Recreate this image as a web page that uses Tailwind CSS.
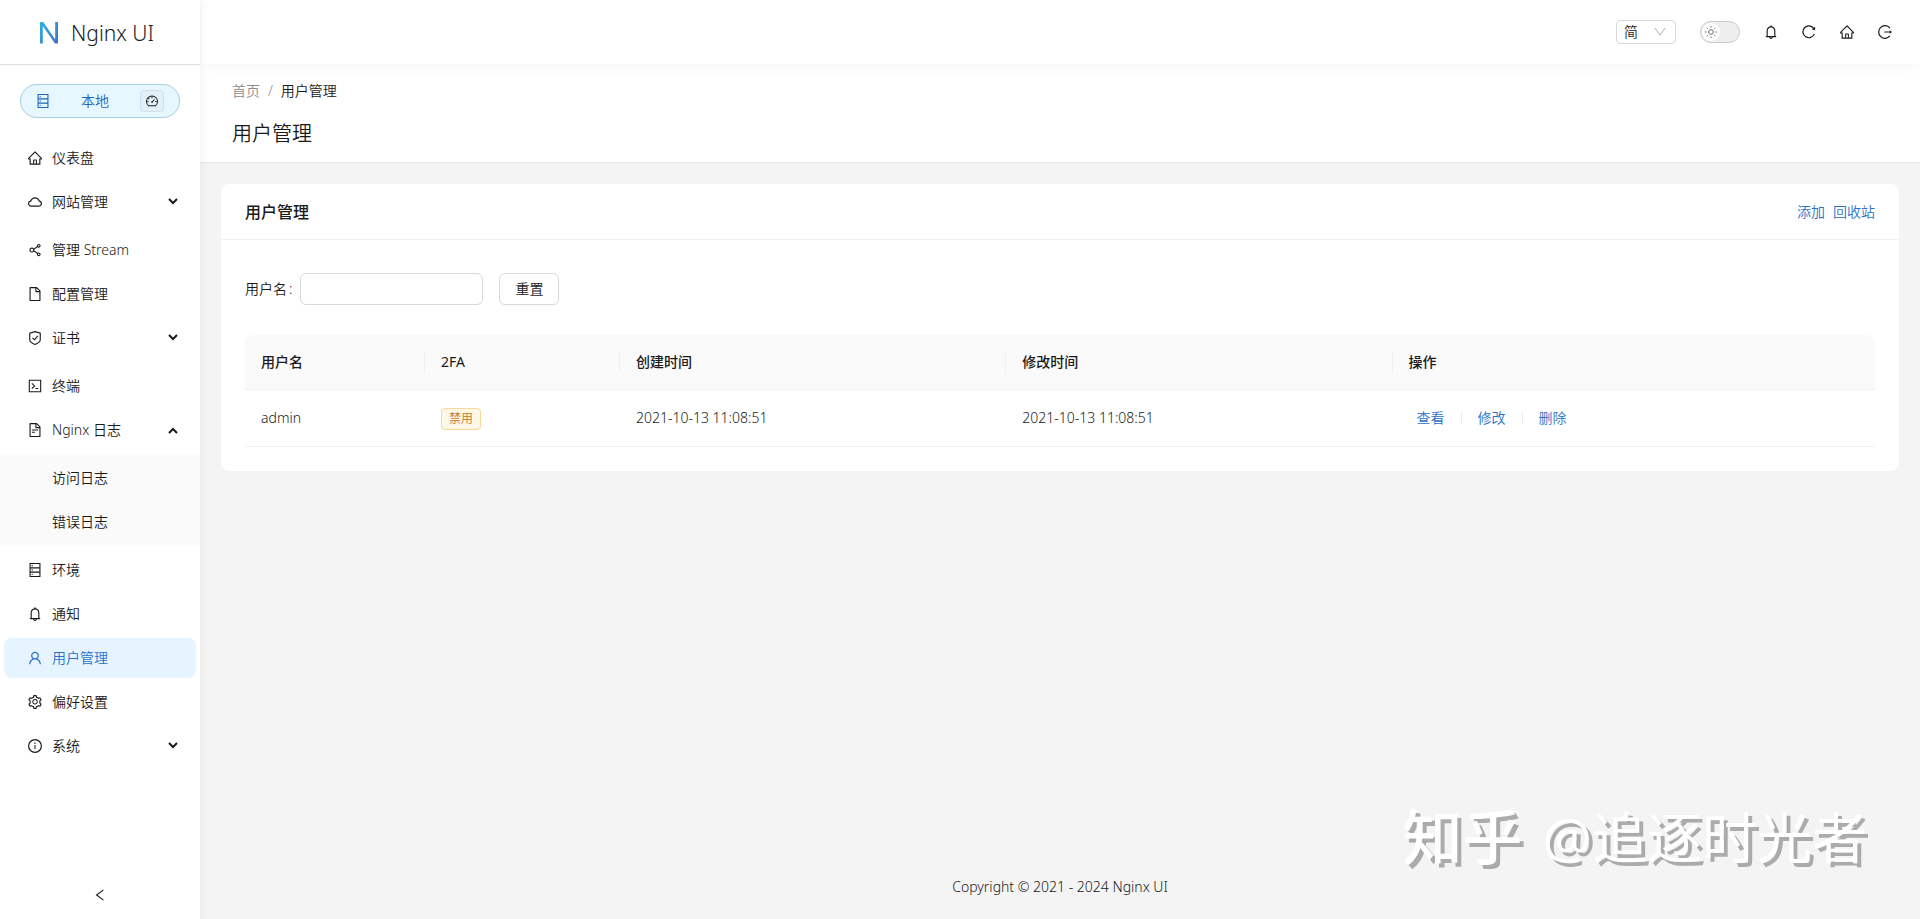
<!DOCTYPE html>
<html lang="zh-CN">
<head>
<meta charset="utf-8">
<title>Nginx UI</title>
<script src="https://cdn.jsdelivr.net/npm/@tailwindcss/browser@4"></script>
</head>
<body class="min-h-screen flex bg-[#f4f4f4] text-sm leading-[22px] font-[350] text-[#1a1a1a] font-['Noto_Sans','Noto_Sans_CJK_SC',sans-serif]">

<svg class="hidden" aria-hidden="true">
  <symbol id="home" viewBox="64 64 896 896"><path d="M946.5 505L560.1 118.8l-25.9-25.9a31.5 31.5 0 00-44.4 0L77.5 505a63.9 63.9 0 00-18.8 46c.4 35.2 29.7 63.3 64.9 63.3h42.5V940h691.8V614.3h43.4c17.1 0 33.2-6.7 45.3-18.8a63.6 63.6 0 0018.7-45.3c0-17-6.7-33.1-18.8-45.2zM568 868H456V664h112v204zm217.9-325.7V868H632V640c0-22.1-17.9-40-40-40H432c-22.1 0-40 17.9-40 40v228H238.1V542.3h-96l370-369.7 23.1 23.1L882 542.3h-96.1z"/></symbol>
  <symbol id="cloud" viewBox="64 64 896 896"><path d="M811.4 418.7C765.6 297.9 648.9 212 512.2 212S258.8 297.8 213 418.6C127.3 441.1 64 519.1 64 612c0 110.5 89.5 200 199.9 200h496.2C870.5 812 960 722.5 960 612c0-92.7-63.1-170.7-148.6-193.3zm36.3 281a123.07 123.07 0 01-87.6 36.3H263.9c-33.1 0-64.2-12.9-87.6-36.3A123.3 123.3 0 01140 612c0-28 9.1-54.3 26.2-76.3a125.7 125.7 0 0166.1-43.7l37.9-9.9 13.9-36.6c8.6-22.8 20.6-44.1 35.7-63.4a245.6 245.6 0 0152.4-49.9c41.1-28.9 89.5-44.2 140-44.2s98.9 15.3 140 44.2c19.9 14 37.5 30.8 52.4 49.9 15.1 19.3 27.1 40.7 35.7 63.4l13.8 36.5 37.8 10c54.3 14.5 92.1 63.8 92.1 120 0 33.1-12.9 64.3-36.3 87.7z"/></symbol>
  <symbol id="share" viewBox="64 64 896 896"><path d="M752 664c-28.5 0-54.8 10-75.4 26.7L469.4 540.8a160.68 160.68 0 000-57.6l207.2-149.9C697.2 350 723.5 360 752 360c66.2 0 120-53.8 120-120s-53.8-120-120-120-120 53.8-120 120c0 11.6 1.6 22.7 4.7 33.3L439.9 415.8C410.7 377.1 364.3 352 312 352c-88.4 0-160 71.6-160 160s71.6 160 160 160c52.3 0 98.7-25.1 127.9-63.8l196.8 142.5c-3.1 10.6-4.7 21.8-4.7 33.3 0 66.2 53.8 120 120 120s120-53.8 120-120-53.8-120-120-120zm0-476c28.7 0 52 23.3 52 52s-23.3 52-52 52-52-23.3-52-52 23.3-52 52-52zM312 600c-48.5 0-88-39.5-88-88s39.5-88 88-88 88 39.5 88 88-39.5 88-88 88zm440 236c-28.7 0-52-23.3-52-52s23.3-52 52-52 52 23.3 52 52-23.3 52-52 52z"/></symbol>
  <symbol id="file" viewBox="64 64 896 896"><path d="M854.6 288.6L639.4 73.4c-6-6-14.1-9.4-22.6-9.4H192c-17.7 0-32 14.3-32 32v832c0 17.7 14.3 32 32 32h640c17.7 0 32-14.3 32-32V311.3c0-8.5-3.4-16.7-9.4-22.7zM790.2 326H602V137.8L790.2 326zm1.8 562H232V136h302v216a42 42 0 0042 42h216v494z"/></symbol>
  <symbol id="filetext" viewBox="64 64 896 896"><path d="M854.6 288.6L639.4 73.4c-6-6-14.1-9.4-22.6-9.4H192c-17.7 0-32 14.3-32 32v832c0 17.7 14.3 32 32 32h640c17.7 0 32-14.3 32-32V311.3c0-8.5-3.4-16.7-9.4-22.7zM790.2 326H602V137.8L790.2 326zm1.8 562H232V136h302v216a42 42 0 0042 42h216v494zM504 618H320c-4.4 0-8 3.6-8 8v48c0 4.4 3.6 8 8 8h184c4.4 0 8-3.6 8-8v-48c0-4.4-3.6-8-8-8zM312 490v48c0 4.4 3.6 8 8 8h384c4.4 0 8-3.6 8-8v-48c0-4.4-3.6-8-8-8H320c-4.4 0-8 3.6-8 8z"/></symbol>
  <symbol id="safety" viewBox="64 64 896 896"><path d="M512 102L848 210V640C848 760 640 870 512 922C384 870 176 760 176 640V210ZM352 500L484 626L692 372" fill="none" stroke="currentColor" stroke-width="72"/></symbol>
  <symbol id="code" viewBox="64 64 896 896"><path d="M148 148H876V876H148ZM310 340L486 510L310 680M540 670H714" fill="none" stroke="currentColor" stroke-width="70"/></symbol>
  <symbol id="database" viewBox="64 64 896 896"><path d="M196 100H828V924H196ZM196 374H828M196 650H828" fill="none" stroke="currentColor" stroke-width="70"/><circle cx="330" cy="238" r="42"/><circle cx="330" cy="512" r="42"/><circle cx="330" cy="788" r="42"/></symbol>
  <symbol id="bell" viewBox="64 64 896 896"><path d="M816 768h-24V428c0-141.1-104.3-257.7-240-277.1V112c0-22.1-17.9-40-40-40s-40 17.9-40 40v38.9c-135.7 19.4-240 136-240 277.1v340h-24c-17.7 0-32 14.3-32 32v32c0 4.4 3.6 8 8 8h216c0 61.8 50.2 112 112 112s112-50.2 112-112h216c4.4 0 8-3.6 8-8v-32c0-17.7-14.3-32-32-32zM512 888c-26.5 0-48-21.5-48-48h96c0 26.5-21.5 48-48 48zM304 768V428c0-55.6 21.6-107.8 60.9-147.1S456.4 220 512 220c55.6 0 107.8 21.6 147.1 60.9S720 372.4 720 428v340H304z"/></symbol>
  <symbol id="user" viewBox="64 64 896 896"><path d="M858.5 763.6a374 374 0 00-80.6-119.5 375.63 375.63 0 00-119.5-80.6c-.4-.2-.8-.3-1.2-.5C719.5 518 760 444.7 760 362c0-137-111-248-248-248S264 225 264 362c0 82.7 40.5 156 102.8 201.1-.4.2-.8.3-1.2.5-44.8 18.9-85 46-119.5 80.6a375.63 375.63 0 00-80.6 119.5A371.7 371.7 0 00136 901.8a8 8 0 008 8.2h60c4.4 0 7.9-3.5 8-7.8 2-77.2 33-149.5 87.8-204.3 56.7-56.7 132-87.9 212.2-87.9s155.5 31.2 212.2 87.9C779 752.7 810 825 812 902.2c.1 4.4 3.6 7.8 8 7.8h60a8 8 0 008-8.2c-1-47.8-10.9-94.3-29.5-138.2zM512 534c-45.9 0-89.1-17.9-121.6-50.4S340 407.9 340 362c0-45.9 17.9-89.1 50.4-121.6S466.1 190 512 190s89.1 17.9 121.6 50.4S684 316.1 684 362c0 45.9-17.9 89.1-50.4 121.6S557.9 534 512 534z"/></symbol>
  <symbol id="setting" viewBox="64 64 896 896"><path d="M924.8 625.7l-65.5-56c3.1-19 4.7-38.4 4.7-57.8s-1.6-38.8-4.7-57.8l65.5-56a32.03 32.03 0 009.3-35.2l-.9-2.6a443.74 443.74 0 00-79.7-137.9l-1.8-2.1a32.12 32.12 0 00-35.1-9.5l-81.3 28.9c-30-24.6-63.5-44-99.7-57.6l-15.7-85a32.05 32.05 0 00-25.8-25.7l-2.7-.5c-52.1-9.4-106.9-9.4-159 0l-2.7.5a32.05 32.05 0 00-25.8 25.7l-15.8 85.4a351.86 351.86 0 00-99 57.4l-81.9-29.1a32 32 0 00-35.1 9.5l-1.8 2.1a446.02 446.02 0 00-79.7 137.9l-.9 2.6c-4.5 12.5-.8 26.5 9.3 35.2l66.3 56.6c-3.1 18.8-4.6 38-4.6 57.1 0 19.2 1.5 38.4 4.6 57.1L99 625.5a32.03 32.03 0 00-9.3 35.2l.9 2.6c18.1 50.4 44.9 96.9 79.7 137.9l1.8 2.1a32.12 32.12 0 0035.1 9.5l81.9-29.1c29.8 24.5 63.1 43.9 99 57.4l15.8 85.4a32.05 32.05 0 0025.8 25.7l2.7.5a449.4 449.4 0 00159 0l2.7-.5a32.05 32.05 0 0025.8-25.7l15.7-85a350 350 0 0099.7-57.6l81.3 28.9a32 32 0 0035.1-9.5l1.8-2.1c34.8-41.1 61.6-87.5 79.7-137.9l.9-2.6c4.5-12.3.8-26.3-9.3-35zM788.3 465.9c2.5 15.1 3.8 30.6 3.8 46.1s-1.3 31-3.8 46.1l-6.6 40.1 74.7 63.9a370.03 370.03 0 01-42.6 73.6L721 702.8l-31.4 25.8c-23.9 19.6-50.5 35-79.3 45.8l-38.1 14.3-17.9 97a377.5 377.5 0 01-85 0l-17.9-97.2-37.8-14.5c-28.5-10.8-55-26.2-78.7-45.7l-31.4-25.9-93.4 33.2c-17-22.9-31.2-47.6-42.6-73.6l75.5-64.5-6.5-40c-2.4-14.9-3.7-30.3-3.7-45.5 0-15.3 1.2-30.6 3.7-45.5l6.5-40-75.5-64.5c11.3-26.1 25.6-50.7 42.6-73.6l93.4 33.2 31.4-25.9c23.7-19.5 50.2-34.9 78.7-45.7l37.9-14.3 17.9-97.2c28.1-3.2 56.8-3.2 85 0l17.9 97 38.1 14.3c28.7 10.8 55.4 26.2 79.3 45.8l31.4 25.8 92.8-32.9c17 22.9 31.2 47.6 42.6 73.6L781.8 426l6.5 39.9zM512 326c-97.2 0-176 78.8-176 176s78.8 176 176 176 176-78.8 176-176-78.8-176-176-176zm79.2 255.2A111.6 111.6 0 01512 614c-29.9 0-58-11.7-79.2-32.8A111.6 111.6 0 01400 502c0-29.9 11.7-58 32.8-79.2C454 401.6 482.1 390 512 390c29.9 0 58 11.6 79.2 32.8A111.6 111.6 0 01624 502c0 29.9-11.7 58-32.8 79.2z"/></symbol>
  <symbol id="info" viewBox="64 64 896 896"><circle cx="512" cy="512" r="410" fill="none" stroke="currentColor" stroke-width="76"/><circle cx="512" cy="336" r="48"/><path d="M480 448h64v272h-64z"/></symbol>
  <symbol id="dashboard" viewBox="64 64 896 896"><path d="M264 872A410 410 0 1 1 760 872ZM512 200V300M240 300L310 370M170 550H270M754 550H854" fill="none" stroke="currentColor" stroke-width="76"/><path d="M512 590L700 400" stroke="currentColor" stroke-width="76"/><circle cx="512" cy="590" r="62"/></symbol>
  <symbol id="reload" viewBox="64 64 896 896"><path d="M856 634A378 378 0 1 1 810 280" fill="none" stroke="currentColor" stroke-width="78"/><path d="M905 180V400L690 348Z"/></symbol>
  <symbol id="logout" viewBox="64 64 896 896"><path d="M826 258A405 405 0 1 0 826 766M470 512H860" fill="none" stroke="currentColor" stroke-width="78"/><path d="M815 400L960 512L815 624Z"/></symbol>
  <symbol id="arrow" viewBox="0 0 10 10"><path d="M1 2L5 6L9 2" fill="none" stroke="currentColor" stroke-width="2"/></symbol>
  <symbol id="chevron" viewBox="0 0 12 12"><path d="M1 2L6 9L11 2" fill="none" stroke="currentColor" stroke-width="1.2"/></symbol>
  <symbol id="left" viewBox="0 0 14 14"><path d="M11 1L3 7L11 13" fill="none" stroke="currentColor" stroke-width="1.3"/></symbol>
</svg>

<aside class="relative z-10 w-[200px] shrink-0 min-h-screen bg-white flex flex-col shadow-[2px_0_8px_rgba(29,35,41,0.05)]">
  <a href="#" class="h-16 shrink-0 flex items-center gap-3 pl-[39px] pt-[2px] shadow-[0_1px_1px_rgba(0,0,0,0.12)]">
    <svg class="w-5 h-[22px]" viewBox="0 0 20 22" role="img" aria-label="N">
      <defs><linearGradient id="g" x1="0" y1="0" x2="1" y2="1"><stop offset="0" stop-color="#2cb4e0"/><stop offset="1" stop-color="#4270c8"/></linearGradient></defs>
      <path d="M1 21.500V0H4.200L16.200 17.500V0H19V21.500H16L3.800 4V21.500Z" fill="url(#g)"/>
    </svg>
    <span class="text-[21px]">Nginx UI</span>
  </a>
  <div class="px-5 pt-5 pb-4">
    <div class="h-[34px] rounded-full border border-[#a6cfe0] bg-[#e6f7ff] flex items-center pl-[15px] pr-[15px] text-[#1f66b8]">
      <svg class="size-[14px]" fill="currentColor"><use href="#database"/></svg>
      <span class="flex-1 text-center">本地</span>
      <button type="button" aria-label="dashboard" class="w-6 h-[22px] rounded border border-[#d2dfe6] bg-[#e2f1f8] text-[#1f1f1f] flex items-center justify-center"><svg class="size-3" fill="currentColor"><use href="#dashboard"/></svg></button>
    </div>
  </div>
  <nav class="py-1">
    <ul>
      <li class="mx-1 mb-1"><a href="#" class="h-10 rounded-lg flex items-center gap-[10px] pl-6"><svg class="size-[14px]" fill="currentColor"><use href="#home"/></svg>仪表盘</a></li>
      <li class="mx-1 mb-2"><button type="button" class="w-full h-10 rounded-lg flex items-center gap-[10px] pl-6 pr-[18px]"><svg class="size-[14px]" fill="currentColor"><use href="#cloud"/></svg><span class="flex-1 text-left">网站管理</span><svg class="size-[10px]"><use href="#arrow"/></svg></button></li>
      <li class="mx-1 mb-1"><a href="#" class="h-10 rounded-lg flex items-center gap-[10px] pl-6"><svg class="size-[14px]" fill="currentColor"><use href="#share"/></svg>管理 Stream</a></li>
      <li class="mx-1 mb-1"><a href="#" class="h-10 rounded-lg flex items-center gap-[10px] pl-6"><svg class="size-[14px]" fill="currentColor"><use href="#file"/></svg>配置管理</a></li>
      <li class="mx-1 mb-2"><button type="button" class="w-full h-10 rounded-lg flex items-center gap-[10px] pl-6 pr-[18px]"><svg class="size-[14px]" fill="currentColor"><use href="#safety"/></svg><span class="flex-1 text-left">证书</span><svg class="size-[10px]"><use href="#arrow"/></svg></button></li>
      <li class="mx-1 mb-1"><a href="#" class="h-10 rounded-lg flex items-center gap-[10px] pl-6"><svg class="size-[14px]" fill="currentColor"><use href="#code"/></svg>终端</a></li>
      <li class="mb-1">
        <button type="button" class="w-full h-10 flex items-center gap-[10px] pl-7 pr-[22px] mb-1"><svg class="size-[14px]" fill="currentColor"><use href="#filetext"/></svg><span class="flex-1 text-left">Nginx 日志</span><svg class="size-[10px] rotate-180"><use href="#arrow"/></svg></button>
        <ul class="bg-[#fafafa] py-1 flex flex-col gap-1">
          <li><a href="#" class="h-10 flex items-center pl-[52px]">访问日志</a></li>
          <li><a href="#" class="h-10 flex items-center pl-[52px]">错误日志</a></li>
        </ul>
      </li>
      <li class="mx-1 mb-1"><a href="#" class="h-10 rounded-lg flex items-center gap-[10px] pl-6"><svg class="size-[14px]" fill="currentColor"><use href="#database"/></svg>环境</a></li>
      <li class="mx-1 mb-1"><a href="#" class="h-10 rounded-lg flex items-center gap-[10px] pl-6"><svg class="size-[14px]" fill="currentColor"><use href="#bell"/></svg>通知</a></li>
      <li class="mx-1 mb-1"><a href="#" aria-current="page" class="h-10 rounded-lg flex items-center gap-[10px] pl-6 bg-[#e6f4ff] text-[#2a71c5]"><svg class="size-[14px]" fill="currentColor"><use href="#user"/></svg>用户管理</a></li>
      <li class="mx-1 mb-1"><a href="#" class="h-10 rounded-lg flex items-center gap-[10px] pl-6"><svg class="size-[14px]" fill="currentColor"><use href="#setting"/></svg>偏好设置</a></li>
      <li class="mx-1"><button type="button" class="w-full h-10 rounded-lg flex items-center gap-[10px] pl-6 pr-[18px]"><svg class="size-[14px]" fill="currentColor"><use href="#info"/></svg><span class="flex-1 text-left">系统</span><svg class="size-[10px]"><use href="#arrow"/></svg></button></li>
    </ul>
  </nav>
  <button type="button" aria-label="collapse" class="mt-auto h-12 flex items-center justify-center"><svg class="size-3"><use href="#left"/></svg></button>
</aside>

<div class="flex-1 min-w-0 flex flex-col">
  <header class="relative h-16 shrink-0 bg-white flex items-center justify-end gap-6 pr-7 shadow-[0_0_16px_rgba(0,0,0,0.05)]">
    <div class="relative">
      <select aria-label="language" class="block w-[60px] h-6 rounded border border-[#d9d9d9] bg-white pl-[7px] appearance-none"><option>简</option></select>
      <svg class="absolute right-[10px] top-[6px] size-3 text-[#bfbfbf] pointer-events-none"><use href="#chevron"/></svg>
    </div>
    <button type="button" role="switch" aria-checked="false" aria-label="theme" class="w-10 h-[22px] rounded-full border border-[#c9cacc] bg-[#eeeef0] flex items-center px-px">
      <span class="size-[18px] rounded-full bg-white flex items-center justify-center text-[#6b6b6b]"><svg class="size-3" viewBox="0 0 12 12" fill="none" stroke="currentColor"><circle cx="6" cy="6" r="2.300"/><path d="M6 0V1.500M6 10.500V12M0 6H1.500M10.500 6H12M1.800 1.800L2.800 2.800M9.200 9.200L10.200 10.200M1.800 10.200L2.800 9.200M9.200 2.800L10.200 1.800"/></svg></span>
    </button>
    <button type="button" aria-label="notifications"><svg class="size-[14px]" fill="currentColor"><use href="#bell"/></svg></button>
    <button type="button" aria-label="reload"><svg class="size-[14px]" fill="currentColor"><use href="#reload"/></svg></button>
    <a href="#" aria-label="home"><svg class="size-[14px]" fill="currentColor"><use href="#home"/></svg></a>
    <button type="button" aria-label="logout"><svg class="size-[14px]" fill="currentColor"><use href="#logout"/></svg></button>
  </header>

  <div class="bg-white border-b border-[#e3e3e3] px-8 pt-4 pb-3">
    <nav aria-label="breadcrumb" class="flex gap-2"><a href="#" class="text-[#8c8c8c]">首页</a><span class="text-[#8c8c8c]">/</span><span>用户管理</span></nav>
    <h1 class="mt-4 text-xl leading-8">用户管理</h1>
  </div>

  <main class="px-[21px] pt-[21px]">
    <section class="bg-white rounded-lg">
      <div class="h-14 px-6 border-b border-[#f0f0f0] flex items-center justify-between">
        <h2 class="text-base font-medium">用户管理</h2>
        <div class="flex gap-2 text-[#2a71c5]"><a href="#">添加</a><a href="#">回收站</a></div>
      </div>
      <div class="px-6 pt-[33px] pb-6">
        <form class="flex items-center mb-[30px]">
          <label for="name" class="mr-2">用户名<span class="ml-[2px]">:</span></label>
          <input id="name" type="text" class="w-[183px] h-8 rounded-md border border-[#d9d9d9] px-3 mr-4">
          <button type="reset" class="h-8 px-[15px] rounded-md border border-[#d9d9d9] shadow-[0_2px_0_rgba(0,0,0,0.02)]">重置</button>
        </form>
        <table class="w-full table-fixed border-separate border-spacing-0 text-left">
          <colgroup><col class="w-[180px]"><col class="w-[195px]"><col class="w-[23.7%]"><col class="w-[23.7%]"><col></colgroup>
          <thead>
            <tr class="h-[55px]">
              <th class="bg-[#fafafa] border-b border-[#f0f0f0] rounded-tl-lg font-medium"><div class="pl-4 border-r border-[#f0f0f0]">用户名</div></th>
              <th class="bg-[#fafafa] border-b border-[#f0f0f0] font-normal"><div class="pl-4 border-r border-[#f0f0f0]">2FA</div></th>
              <th class="bg-[#fafafa] border-b border-[#f0f0f0] font-medium"><div class="pl-4 border-r border-[#f0f0f0]">创建时间</div></th>
              <th class="bg-[#fafafa] border-b border-[#f0f0f0] font-medium"><div class="pl-4 border-r border-[#f0f0f0]">修改时间</div></th>
              <th class="bg-[#fafafa] border-b border-[#f0f0f0] rounded-tr-lg font-medium"><div class="pl-4">操作</div></th>
            </tr>
          </thead>
          <tbody>
            <tr class="h-[57px]">
              <td class="border-b border-[#f0f0f0] pl-4">admin</td>
              <td class="border-b border-[#f0f0f0] pl-4"><span class="inline-block align-middle h-[22px] px-[7px] rounded border border-[#f5d99a] bg-[#fff7e6] text-xs leading-5 text-[#c8741f]">禁用</span></td>
              <td class="border-b border-[#f0f0f0] pl-4">2021-10-13 11:08:51</td>
              <td class="border-b border-[#f0f0f0] pl-4">2021-10-13 11:08:51</td>
              <td class="border-b border-[#f0f0f0] pl-4"><div class="flex items-center gap-2 text-[#2a71c5]"><button type="button" class="px-2">查看</button><span class="w-px h-3 bg-[#ececec]"></span><button type="button" class="px-2">修改</button><span class="w-px h-3 bg-[#ececec]"></span><button type="button" class="px-2">删除</button></div></td>
            </tr>
          </tbody>
        </table>
      </div>
    </section>
  </main>

  <footer class="mt-auto pb-[21px] text-center">Copyright © 2021 - 2024 Nginx UI</footer>
</div>

<div class="absolute right-[53px] bottom-[42px] flex items-center gap-5 text-white font-medium whitespace-nowrap pointer-events-none text-shadow-[4px_4px_0_#ababab] leading-[80px]"><span class="text-[60px]">知乎</span><span class="text-[55px] font-normal">@追逐时光者</span></div>
</body>
</html>
